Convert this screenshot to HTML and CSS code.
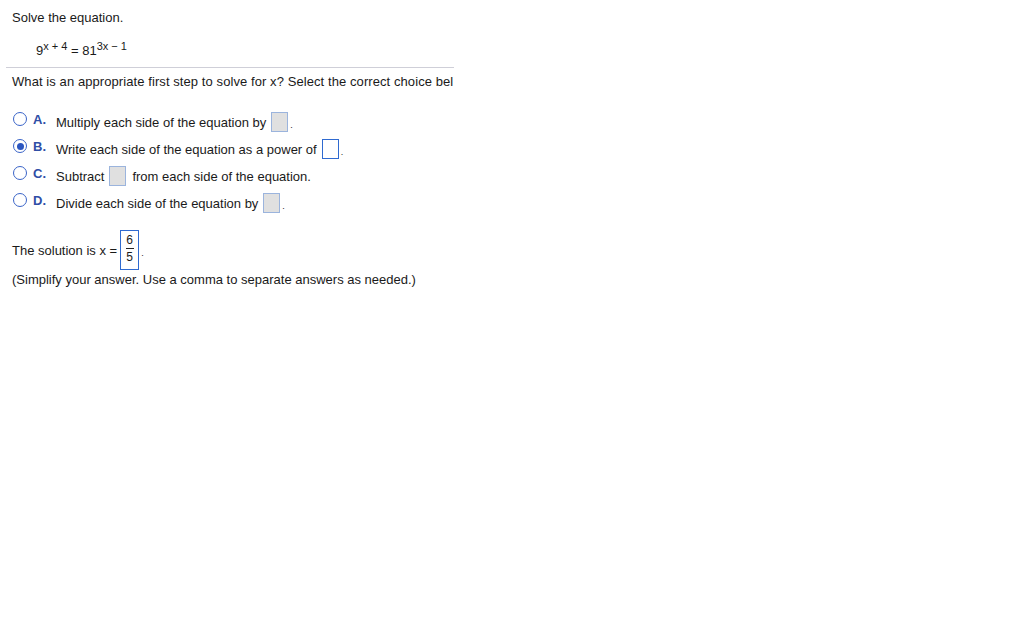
FILE: index.html
```html
<!DOCTYPE html>
<html>
<head>
<meta charset="utf-8">
<link rel="stylesheet" href="styles.css">
</head>
<body>
<div class="page">
  <div class="prompt">Solve the equation.</div>
  <div class="equation">9<sup>x + 4</sup> = 81<sup>3x − 1</sup></div>
  <div class="rule"></div>
  <div class="question">What is an appropriate first step to solve for x? Select the correct choice bel</div>
  <div class="choices">
    <div class="choice">
      <span class="radio"></span><span class="letter">A.</span>
      <span class="text">Multiply each side of the equation by</span><span class="box"></span><span class="dot">.</span>
    </div>
    <div class="choice">
      <span class="radio checked"></span><span class="letter">B.</span>
      <span class="text">Write each side of the equation as a power of</span><span class="box active"></span><span class="dot">.</span>
    </div>
    <div class="choice">
      <span class="radio"></span><span class="letter">C.</span>
      <span class="text">Subtract</span><span class="box mid"></span><span class="text">from each side of the equation.</span>
    </div>
    <div class="choice">
      <span class="radio"></span><span class="letter">D.</span>
      <span class="text">Divide each side of the equation by</span><span class="box"></span><span class="dot">.</span>
    </div>
  </div>
  <div class="solution">
    <span>The solution is x =</span>
    <span class="frac"><span class="num">6</span><span class="bar"></span><span class="den">5</span></span><span class="dot">.</span>
  </div>
  <div class="note">(Simplify your answer. Use a comma to separate answers as needed.)</div>
</div>
</body>
</html>
```

FILE: styles.css
```css
html, body {
  margin: 0;
  padding: 0;
  background: #fff;
}
body {
  font-family: "Liberation Sans", Arial, sans-serif;
  font-size: 13px;
  color: #1a1a1a;
}
.page {
  width: 460px;
  padding: 9px 0 0 12px;
}
.prompt {
  line-height: 18px;
}
.equation {
  margin-top: 15px;
  margin-left: 24px;
  line-height: 18px;
  font-size: 13px;
}
.equation sup {
  font-size: 11px;
  vertical-align: 5px;
  line-height: 0;
}
.rule {
  margin: 7px 0 0 -6px;
  width: 448px;
  height: 1px;
  background: #cfcfd8;
}
.question {
  margin-top: 5px;
  white-space: nowrap;
  line-height: 18px;
  letter-spacing: 0.08px;
}
.choices {
  margin-top: 20px;
  display: flex;
  flex-direction: column;
  gap: 5px;
}
.choice {
  display: flex;
  align-items: center;
  height: 22px;
}
.radio {
  width: 12px;
  height: 12px;
  border: 1px solid #3a64c8;
  border-radius: 50%;
  margin-left: 1px;
  box-sizing: content-box;
  position: relative;
  top: -3px;
  flex: none;
}
.radio.checked::after {
  content: "";
  position: absolute;
  left: 2.5px;
  top: 2.5px;
  width: 7px;
  height: 7px;
  border-radius: 50%;
  background: #2a55c0;
}
.letter {
  color: #2f4ea6;
  font-weight: bold;
  margin-left: 6px;
  width: 23px;
  position: relative;
  top: -3px;
}
.text {
  white-space: nowrap;
}
.box {
  display: inline-block;
  width: 15px;
  height: 18px;
  border: 1px solid #9bb4dd;
  background: #e0e0e0;
  margin-left: 5px;
  flex: none;
}
.box.active {
  background: #fff;
  border-color: #2f6ad0;
}
.box.mid {
  margin: 0 6px 0 5px;
}
.dot {
  font-size: 9px;
  margin-left: 2px;
  position: relative;
  top: 3px;
}
.solution {
  margin-top: 16px;
  display: flex;
  align-items: center;
}
.frac {
  display: inline-flex;
  flex-direction: column;
  align-items: center;
  width: 17px;
  height: 36px;
  border: 1px solid #2f6ad0;
  margin-left: 3px;
  padding: 1px 0;
  font-size: 12px;
  line-height: 16px;
}
.frac .bar {
  width: 8px;
  height: 1px;
  background: #222;
}
.note {
  margin-top: 1px;
  white-space: nowrap;
  line-height: 18px;
}
```
